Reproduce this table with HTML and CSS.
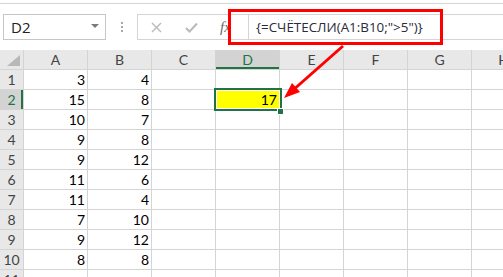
FILE: index.html
```
<!doctype html>
<html lang="ru">
<head>
    <meta charset="utf-8">
    <title>СЧЁТЕСЛИ</title>
    <link rel="stylesheet" href="styles.css">
</head>
<body>
<div class="page">

    <div class="ribbon-edge"></div>

    <!-- name box + formula bar -->
    <div class="formula-row">
        <div class="name-box">
            <span>D2</span>
            <span class="caret"></span>
        </div>
        <div class="grip"><i></i><i></i><i></i></div>
        <div class="formula-box">
            <div class="fx-buttons">
                <svg class="btn-cancel" width="11" height="11" viewBox="0 0 11 11">
                    <path d="M1 1L10 10M10 1L1 10" stroke="#b9b9b9" stroke-width="1.4" fill="none"/>
                </svg>
                <svg class="btn-enter" width="13" height="11" viewBox="0 0 13 11">
                    <path d="M1 6L4.5 9.5L12 1.5" stroke="#b9b9b9" stroke-width="2" fill="none"/>
                </svg>
                <span class="fx">fx</span>
            </div>
            <div class="formula-input">{=СЧЁТЕСЛИ(A1:B10;"&gt;5")}</div>
        </div>
    </div>

    <!-- worksheet -->
    <div class="grid">
        <div class="hd corner"><span class="tri"></span></div>
        <div class="hd">A</div>
        <div class="hd">B</div>
        <div class="hd">C</div>
        <div class="hd on-col">D</div>
        <div class="hd">E</div>
        <div class="hd">F</div>
        <div class="hd">G</div>
        <div class="hd">H</div>

        <div class="rh">1</div>
        <div class="c">3</div><div class="c">4</div><div class="c"></div><div class="c"></div>
        <div class="c"></div><div class="c"></div><div class="c"></div><div class="c"></div>

        <div class="rh on-row">2</div>
        <div class="c">15</div><div class="c">8</div><div class="c"></div><div class="c sel">17</div>
        <div class="c"></div><div class="c"></div><div class="c"></div><div class="c"></div>

        <div class="rh">3</div>
        <div class="c">10</div><div class="c">7</div><div class="c"></div><div class="c"></div>
        <div class="c"></div><div class="c"></div><div class="c"></div><div class="c"></div>

        <div class="rh">4</div>
        <div class="c">9</div><div class="c">8</div><div class="c"></div><div class="c"></div>
        <div class="c"></div><div class="c"></div><div class="c"></div><div class="c"></div>

        <div class="rh">5</div>
        <div class="c">9</div><div class="c">12</div><div class="c"></div><div class="c"></div>
        <div class="c"></div><div class="c"></div><div class="c"></div><div class="c"></div>

        <div class="rh">6</div>
        <div class="c">11</div><div class="c">6</div><div class="c"></div><div class="c"></div>
        <div class="c"></div><div class="c"></div><div class="c"></div><div class="c"></div>

        <div class="rh">7</div>
        <div class="c">11</div><div class="c">4</div><div class="c"></div><div class="c"></div>
        <div class="c"></div><div class="c"></div><div class="c"></div><div class="c"></div>

        <div class="rh">8</div>
        <div class="c">7</div><div class="c">10</div><div class="c"></div><div class="c"></div>
        <div class="c"></div><div class="c"></div><div class="c"></div><div class="c"></div>

        <div class="rh">9</div>
        <div class="c">9</div><div class="c">12</div><div class="c"></div><div class="c"></div>
        <div class="c"></div><div class="c"></div><div class="c"></div><div class="c"></div>

        <div class="rh">10</div>
        <div class="c">8</div><div class="c">8</div><div class="c"></div><div class="c"></div>
        <div class="c"></div><div class="c"></div><div class="c"></div><div class="c"></div>

        <div class="rh">11</div>
        <div class="c"></div><div class="c"></div><div class="c"></div><div class="c"></div>
        <div class="c"></div><div class="c"></div><div class="c"></div><div class="c"></div>
    </div>

    <!-- red callout round the formula and arrow to the result -->
    <div class="callout"></div>
    <svg class="arrow" width="503" height="277" viewBox="0 0 503 277">
        <line x1="343" y1="46" x2="292" y2="91" stroke="#f00" stroke-width="3"/>
        <polygon points="284,98 300,92 292,83" fill="#f00"/>
    </svg>

</div>
</body>
</html>
```

FILE: styles.css
```
html, body {
    margin: 0;
    background: #fff;
}

.page {
    position: relative;
    width: 503px;
    height: 277px;
    overflow: hidden;
    font-family: Lato, "Liberation Sans", sans-serif;
}

.ribbon-edge {
    height: 3px;
    border-bottom: 1px solid #d5d5d5;
}

/* formula bar */

.formula-row {
    display: flex;
    height: 26px;
    margin: 10px 0 10px 0;
    font-family: "Open Sans", "Noto Sans", sans-serif;
}

.name-box {
    box-sizing: border-box;
    width: 103px;
    margin-left: 3px;
    border: 1px solid #c6c6c6;
    display: flex;
    align-items: center;
    justify-content: space-between;
    padding: 0 6px 0 7px;
    font-size: 15px;
    color: #222;
}

.caret {
    width: 0;
    height: 0;
    border-left: 4px solid transparent;
    border-right: 4px solid transparent;
    border-top: 4px solid #7a7a7a;
    margin-top: -2px;
}

.grip {
    width: 31px;
    display: flex;
    flex-direction: column;
    align-items: center;
    justify-content: center;
    gap: 2px;
}

.grip i {
    width: 2px;
    height: 2px;
    background: #a8a8a8;
}

.formula-box {
    flex: 1;
    display: flex;
    border: 1px solid #d4d4d4;
    border-right: none;
}

.fx-buttons {
    width: 110px;
    display: flex;
    align-items: center;
    padding-left: 13px;
    box-sizing: border-box;
}

.btn-cancel {
    margin-right: 23px;
}

.btn-enter {
    margin-right: 22px;
}

.fx {
    font-family: "Liberation Serif", serif;
    font-style: italic;
    font-size: 15px;
    color: #6b6b6b;
}

.formula-input {
    flex: 1;
    border-left: 1px solid #d4d4d4;
    padding-left: 7px;
    font-size: 13.4px;
    line-height: 24px;
    color: #2b2b3a;
    white-space: nowrap;
}

/* worksheet grid */

.grid {
    display: grid;
    grid-template-columns: 23px repeat(8, 63px);
    grid-auto-rows: 19px;
    gap: 1px;
    background: #d4d4d4;
    font-size: 14px;
    line-height: 19px;
}

.hd,
.rh {
    background: #e8e8e8;
    color: #444;
    text-align: center;
}

.corner {
    position: relative;
}

.tri {
    position: absolute;
    left: 7px;
    top: 5px;
    width: 13px;
    height: 11px;
    background: #b8b8b8;
    clip-path: polygon(100% 0, 100% 100%, 0 100%);
}

.on-col {
    background: #d3d3d3;
    color: #217346;
    box-shadow: inset 0 -2px 0 #217346;
}

.on-row {
    background: #d3d3d3;
    color: #217346;
    box-shadow: inset -2px 0 0 #217346;
}

.c {
    background: #fff;
    text-align: right;
    padding-right: 2px;
    color: #000;
}

.sel {
    position: relative;
    background: #ffff00;
}

.sel::before {
    content: "";
    position: absolute;
    inset: -2px -3px -2px -2px;
    border: 2px solid #217346;
    box-shadow: inset 0 0 0 1px #fff;
}

.sel::after {
    content: "";
    position: absolute;
    right: -5px;
    bottom: -6px;
    width: 5px;
    height: 5px;
    background: #217346;
    border: 1px solid #fff;
}

/* overlays */

.callout {
    position: absolute;
    left: 228px;
    top: 9px;
    width: 215px;
    height: 36px;
    box-sizing: border-box;
    border: 3px solid #f00;
}

.arrow {
    position: absolute;
    left: 0;
    top: 0;
    pointer-events: none;
}
```
